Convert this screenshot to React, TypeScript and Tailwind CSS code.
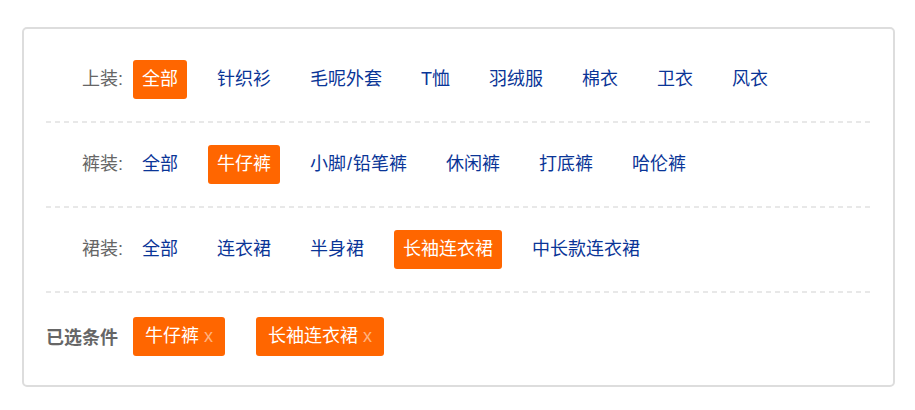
const FONT = { fontFamily: '"Liberation Sans", "Noto Sans CJK SC", sans-serif' }

type Group = { label: string; items: string[]; active: number }

const groups: Group[] = [
  { label: '上装:', items: ['全部', '针织衫', '毛呢外套', 'T恤', '羽绒服', '棉衣', '卫衣', '风衣'], active: 0 },
  { label: '裤装:', items: ['全部', '牛仔裤', '小脚/铅笔裤', '休闲裤', '打底裤', '哈伦裤'], active: 1 },
  { label: '裙装:', items: ['全部', '连衣裙', '半身裙', '长袖连衣裙', '中长款连衣裙'], active: 3 },
]

const chosen = ['牛仔裤', '长袖连衣裙']

function Divider() {
  return <div className="h-[2px] w-full bg-[repeating-linear-gradient(90deg,#e8e8e8_0_5px,transparent_5px_9px)]" />
}

export default function App() {
  return (
    <div className="min-h-screen bg-white pl-[22px] pt-[27px]" style={FONT}>
      <div className="w-[873px] rounded-[5px] border-2 border-[#dddddd] px-[22px] pt-[9px] pb-[9px] text-[18px] leading-[27px]">
        {groups.map((g) => (
          <div key={g.label}>
            <div className="flex items-center py-[22px]">
              <span className="w-[77px] shrink-0 text-right text-[#666666]">{g.label}</span>
              <div className="ml-[10px] flex gap-[21px]">
                {g.items.map((it, i) => (
                  <span
                    key={it}
                    className={
                      i === g.active
                        ? 'cursor-pointer rounded-[3px] bg-[#ff6600] px-[9px] py-[6px] text-white'
                        : 'cursor-pointer rounded-[3px] px-[9px] py-[6px] text-[#0a3597]'
                    }
                  >
                    {it.includes('/') ? (
                      <>
                        {it.split('/')[0]}
                        <span className="px-[1px]">/</span>
                        {it.split('/')[1]}
                      </>
                    ) : (
                      it
                    )}
                  </span>
                ))}
              </div>
            </div>
            <Divider />
          </div>
        ))}
        <div className="flex items-center pt-[24px] pb-[20px]">
          <span className="mt-[4px] w-[72px] shrink-0 font-bold text-[#666666]">已选条件</span>
          <div className="ml-[15px] flex gap-[31px]">
            {chosen.map((c) => (
              <span key={c} className="rounded-[3px] bg-[#ff6600] px-3 py-[6px] text-white">
                {c}
                <span className="ml-[5px] text-[#ffb380]">x</span>
              </span>
            ))}
          </div>
        </div>
      </div>
    </div>
  )
}
